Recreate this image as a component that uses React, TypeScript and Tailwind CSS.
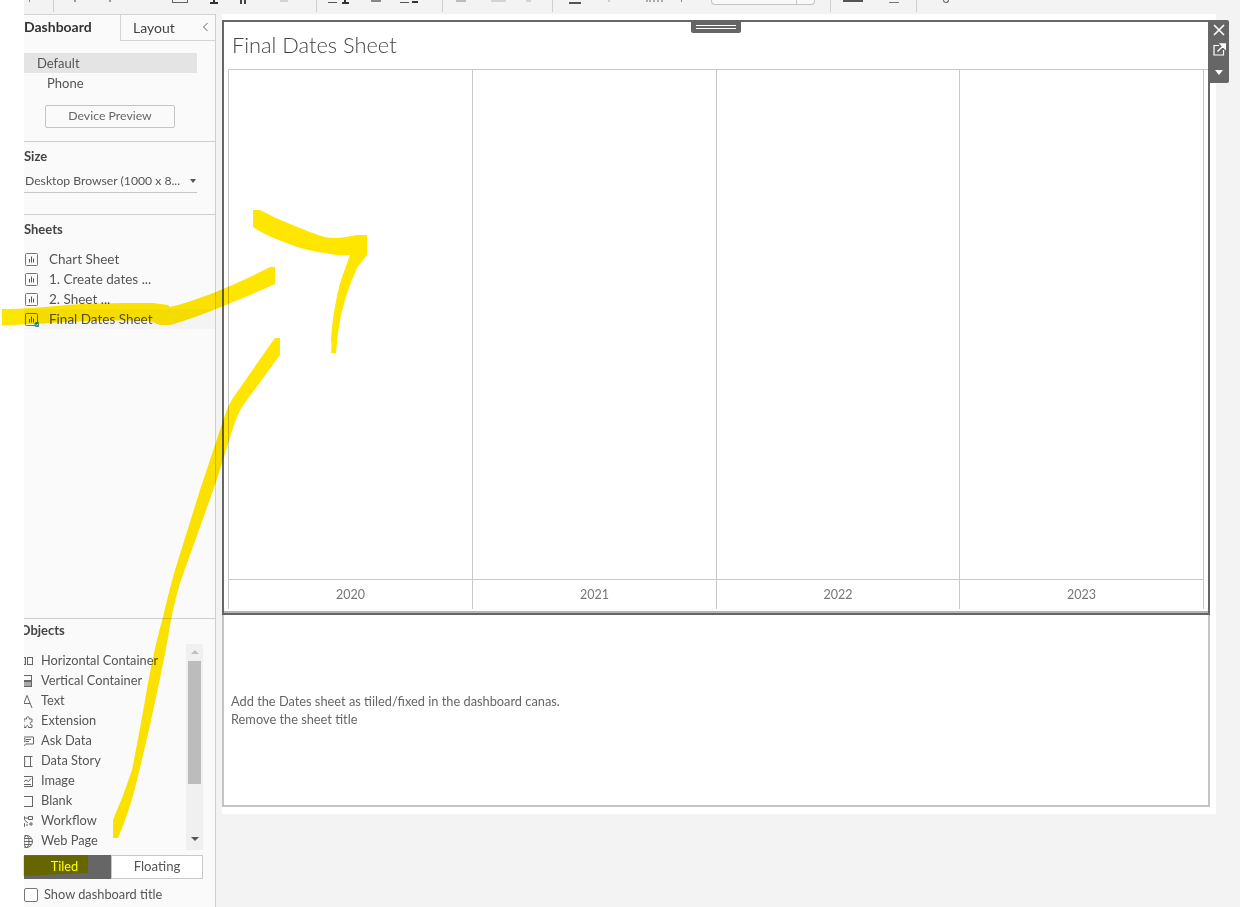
import React from "react";

const FONT = "font-['Lato','Open_Sans',sans-serif]";

function SheetIcon({ check = false }: { check?: boolean }) {
  return (
    <svg width="15" height="16" viewBox="0 0 15 16" className="shrink-0">
      <rect x="1.5" y="2.5" width="12" height="12" rx="1" fill="none" stroke="#777" />
      <path d="M5.5 11.5V8M7.5 11.5V5.5M9.5 11.5V7.5" stroke="#555" strokeWidth="1" />
      {check && <circle cx="13" cy="13.5" r="2.6" fill="#2a7f8e" />}
      {check && <path d="M11.8 13.5l1 1 1.4-1.8" stroke="#fff" strokeWidth="0.8" fill="none" />}
    </svg>
  );
}

function ObjectIcon({ name }: { name: string }) {
  const s = { fill: "none", stroke: "#666", strokeWidth: 1 };
  return (
    <svg width="15" height="15" viewBox="0 0 15 15" className="shrink-0">
      {name === "h" && (
        <g {...s}>
          <rect x="0.5" y="3.5" width="5" height="7" fill="#ddd" />
          <rect x="7.5" y="3.5" width="5" height="7" />
        </g>
      )}
      {name === "v" && (
        <g {...s}>
          <rect x="2.5" y="1.5" width="9" height="5" />
          <rect x="2.5" y="7.5" width="9" height="5" fill="#aaa" />
        </g>
      )}
      {name === "t" && <path d="M2 14L7 1.5 12 14M3.8 9.5h6.4" {...s} />}
      {name === "e" && <path d="M4 5h2.5c-.8-3 3.5-3 2.7 0H12v3c-2.5-.8-2.5 3.5 0 3v2.5H8.5c.7-2.5-3-2.5-2.5 0H4v-3c-2.5.6-2.5-3 0-2.5z" {...s} />}
      {name === "a" && <path d="M4 3h9.5v7H5.5L3 13v-3M6 5.5h5M6 7.5h3M2 6l3-1.5V8z" {...s} />}
      {name === "d" && <path d="M1.5 2.5h11M1.5 12.5h11M4 2.5c1 3 1 7 0 10M10.5 2.5v10M4 2.5c0 3 0 7 0 10" {...s} />}
      {name === "i" && <path d="M1.5 2.5h11v10h-11zM3 8.5l3-2.5 2.5 1.5 2.5-3M3 10.5h8" {...s} />}
      {name === "b" && <rect x="1.5" y="2.5" width="11" height="10" {...s} />}
      {name === "w" && <path d="M1.5 2.5h3v3h-3zM8.5 2.5h4v3h-4zM1.5 9.5h3v3h-3zM5 4h3M4.5 6l3.5 3M9 10h4M11 8v4M6 11h2" {...s} />}
      {name === "g" && (
        <g {...s}>
          <circle cx="6.5" cy="7.5" r="6" />
          <ellipse cx="6.5" cy="7.5" rx="2.5" ry="6" />
          <path d="M.5 7.5h12M1.5 4.5h10M1.5 10.5h10" />
        </g>
      )}
    </svg>
  );
}

const objects = [
  ["h", "Horizontal Container"],
  ["v", "Vertical Container"],
  ["t", "Text"],
  ["e", "Extension"],
  ["a", "Ask Data"],
  ["d", "Data Story"],
  ["i", "Image"],
  ["b", "Blank"],
  ["w", "Workflow"],
  ["g", "Web Page"],
];

const sheets = ["Chart Sheet", "1. Create dates ...", "2. Sheet ...", "Final Dates Sheet"];
const years = ["2020", "2021", "2022", "2023"];

function Toolbar() {
  return (
    <div className="flex h-[14px] items-start overflow-hidden bg-[#f3f3f3] [&>*]:shrink-0">
      <div className="ml-[5px] h-[2px] w-[1px] bg-[#7a7ac8]" />
      <div className="ml-[23px] h-[12px] w-px bg-[#d0d0d0]" />
      <div className="ml-[20px] h-[2px] w-[2px] bg-[#999]" />
      <div className="ml-[33px] h-[2px] w-[2px] bg-[#999]" />
      <div className="ml-[61px] h-[3px] w-[16px] border-x border-b border-[#666]" />
      <div className="relative ml-[22px] h-[4px] w-[8px] border-b-2 border-[#333]">
        <div className="absolute left-[3px] top-0 h-[4px] w-[2px] bg-[#333]" />
      </div>
      <div className="ml-[22px] h-[4px] w-[6px] border-x-2 border-[#444]" />
      <div className="ml-[34px] h-[2px] w-[8px] bg-[#d4d4d4]" />
      <div className="ml-[28px] h-[12px] w-px bg-[#d0d0d0]" />
      <div className="ml-[11px] h-[3px] w-[9px] border-b border-[#555]" />
      <div className="relative ml-[5px] h-[4px] w-[7px] border-b-2 border-[#333]">
        <div className="absolute left-[2px] top-0 h-[4px] w-[2px] bg-[#333]" />
      </div>
      <div className="ml-[22px] h-[2px] w-[10px] bg-[#888]" />
      <div className="ml-[19px] h-[3px] w-[9px] border-b border-[#555]" />
      <div className="ml-[3px] h-[3px] w-[6px] border-b-2 border-[#333]" />
      <div className="ml-[24px] h-[12px] w-px bg-[#d0d0d0]" />
      <div className="ml-[13px] h-[2px] w-[10px] bg-[#bbb]" />
      <div className="ml-[25px] h-[2px] w-[15px] bg-[#d4d4d4]" />
      <div className="ml-[20px] h-[2px] w-[5px] bg-[#d4d4d4]" />
      <div className="ml-[21px] h-[12px] w-px bg-[#d0d0d0]" />
      <div className="ml-[16px] mt-[2px] h-[2px] w-[12px] bg-[#555]" />
      <div className="ml-[27px] h-[2px] w-[2px] bg-[#ccc]" />
      <div className="ml-[36px] h-[2px] w-[17px] border-b-2 border-dotted border-[#aaa]" />
      <div className="ml-[18px] h-[2px] w-px bg-[#888]" />
      <div className="ml-[29px] flex h-[5px] w-[104px] justify-end rounded-b-sm border border-t-0 border-[#c4c4c4] bg-[#f8f8f8]">
        <div className="w-[18px] border-l border-[#c4c4c4]" />
      </div>
      <div className="ml-[15px] h-[12px] w-px bg-[#d0d0d0]" />
      <div className="ml-[12px] h-[2px] w-[20px] bg-[#555]" />
      <div className="ml-[26px] h-[3px] w-[10px] border-b border-[#777]" />
      <div className="ml-[17px] h-[12px] w-px bg-[#d0d0d0]" />
      <div className="ml-[26px] h-[3px] w-[6px] rounded-b-full border-x border-b border-[#666]" />
    </div>
  );
}

function Sidebar() {
  return (
    <aside className="flex h-full w-[192px] shrink-0 flex-col overflow-hidden border-r border-[#cfcfcf] bg-[#fafafa] pb-[4px] text-[13.5px] text-[#555]">
      <div className="flex h-[27px] shrink-0 border-t border-[#d4d4d4]">
        <div className="flex w-[97px] items-center border-r border-[#d4d4d4] pb-[4px] text-[14px] font-bold text-[#333]">Dashboard</div>
        <div className="flex flex-1 items-center justify-between border-b border-[#d4d4d4] pb-[1px] pl-[12px] pr-[6px] text-[14px] text-[#444]">
          <span>Layout</span>
          <svg width="7" height="10" viewBox="0 0 7 10"><path d="M5.5 1L1.5 5l4 4" fill="none" stroke="#666" /></svg>
        </div>
      </div>
      <div className="mt-[12px] flex h-[20px] w-[173px] shrink-0 items-center bg-[#e4e4e4] pl-[13px] pt-[1px] text-[13px]">Default</div>
      <div className="flex h-[20px] shrink-0 items-center pl-[23px] pt-[1px] text-[13px]">Phone</div>
      <button className="ml-[21px] mt-[12px] h-[23px] w-[130px] shrink-0 rounded-[2px] border border-[#c4c4c4] text-[12.3px] text-[#666]">Device Preview</button>
      <div className="mt-[13px] shrink-0 border-t border-[#d0d0d0]" />
      <div className="mt-[5px] h-[19px] shrink-0 text-[13px] font-bold text-[#444]">Size</div>
      <div className="mt-[6px] flex h-[21px] w-[173px] shrink-0 items-center justify-between border-b border-[#c8c8c8] px-[1px] pb-[2px] text-[12.2px]">
        <span>Desktop Browser (1000 x 8...</span>
        <span className="h-0 w-0 border-x-[3.5px] border-t-[4px] border-x-transparent border-t-[#555]" />
      </div>
      <div className="mt-[21px] shrink-0 border-t border-[#d0d0d0]" />
      <div className="mt-[5px] h-[19px] shrink-0 text-[13px] font-bold text-[#444]">Sheets</div>
      <div className="mt-[10px] flex shrink-0 flex-col">
        {sheets.map((s, i) => (
          <div key={s} className={`flex h-[20px] items-center gap-[10px] ${i === 3 ? "bg-[#f4f4f4]" : ""}`}>
            <SheetIcon check={i === 3} />
            <span>{s}</span>
          </div>
        ))}
      </div>
      <div className="flex-1" />
      <div className="shrink-0 border-t border-[#d0d0d0]" />
      <div className="ml-[-4px] mt-[2px] h-[18px] shrink-0 text-[13px] font-bold text-[#444]">Objects</div>
      <div className="mt-[5px] flex h-[206px] w-[179px] shrink-0">
        <div className="ml-[-4px] flex-1 pt-[7px]">
          {objects.map(([icon, label]) => (
            <div key={label} className="flex h-[20px] items-center whitespace-nowrap text-[12.8px]">
              <ObjectIcon name={icon} />
              <span className="ml-[6px]">{label}</span>
            </div>
          ))}
        </div>
        <div className="flex w-[17px] shrink-0 flex-col items-center bg-[#f0f0f0]">
          <span className="mt-[6px] h-0 w-0 border-x-[4px] border-b-[4px] border-x-transparent border-b-[#c0c0c0]" />
          <div className="mt-[7px] h-[123px] w-[13px] bg-[#bcbcbc]" />
          <span className="mt-[53px] h-0 w-0 border-x-[4px] border-t-[4px] border-x-transparent border-t-[#555]" />
        </div>
      </div>
      <div className="mt-[5px] flex h-[24px] w-[179px] shrink-0 text-[12.8px]">
        <div className="flex w-[87px] items-center justify-center bg-[#666] pb-[1px] text-white">
          <span className="mr-[6px]">Tiled</span>
        </div>
        <div className="flex flex-1 items-center justify-center border border-[#c8c8c8] bg-white pb-[1px] text-[13.2px]">Floating</div>
      </div>
      <label className="mt-[8px] flex h-[16px] shrink-0 items-center gap-[6px] text-[12.8px]">
        <span className="h-[14px] w-[14px] rounded-[2px] border border-[#777] bg-white" />
        Show dashboard title
      </label>
    </aside>
  );
}

function Chart() {
  return (
    <div className="ml-[4px] flex h-[540px] border-t border-[#c8c8c8]">
      {years.map((y, i) => (
        <div key={y} className={`flex h-full flex-col border-l border-[#c8c8c8] ${i === 2 ? "w-[243px]" : i === 3 ? "w-[245px] border-r" : "w-[244px]"}`}>
          <div className="h-[510px] border-b border-[#c8c8c8]" />
          <div className="flex flex-1 items-center justify-center pt-[2px] text-[12.5px] text-[#777]">{y}</div>
        </div>
      ))}
    </div>
  );
}

function Canvas() {
  return (
    <main className="flex-1 pl-[6px]">
      <div className="h-[800px] w-[994px] bg-white pt-[6px]">
        <div className="relative h-[595px] w-[988px] border-x-2 border-t-2 border-[#666]">
          <div className="h-[47px] pl-[8px] pt-[10px] text-[21.8px] font-light leading-[26px] text-[#444]">Final Dates Sheet</div>
          <Chart />
          <div className="absolute inset-x-0 bottom-0 h-[4px] border-b-2 border-[#666] bg-[#b4b4b4]" />
          <div className="absolute left-[467px] top-[-1px] flex h-[12px] w-[50px] flex-col items-center justify-center gap-[2px] rounded-b-[2px] bg-[#666]">
            <div className="h-px w-[40px] bg-white" />
            <div className="h-px w-[40px] bg-white" />
          </div>
          <div className="absolute left-[985px] top-[-2px] flex h-[63px] w-[20px] flex-col items-center rounded-r-[2px] bg-[#666]">
            <svg width="12" height="12" viewBox="0 0 12 12" className="mt-[4px]">
              <path d="M1 1l10 10M11 1L1 11" stroke="#fff" strokeWidth="1.6" fill="none" />
            </svg>
            <svg width="13" height="13" viewBox="0 0 13 13" className="mt-[7px]">
              <path d="M6 2.5H1v9.5h9.5V7" stroke="#fff" strokeWidth="1.2" fill="none" />
              <path d="M4.5 8.5L10.5 2.5M7.5 1h5v5z" stroke="#fff" strokeWidth="1.4" fill="#fff" />
            </svg>
            <span className="mt-[14px] h-0 w-0 border-x-[4.5px] border-t-[5px] border-x-transparent border-t-white" />
          </div>
        </div>
        <div className="flex h-[192px] w-[988px] flex-col border-x-2 border-b-2 border-[#c4c4c4] pl-[7px] pt-[77px] text-[12.8px] leading-[18px] text-[#666]">
          <span>Add the Dates sheet as tiiled/fixed in the dashboard canas.</span>
          <span>Remove the sheet title</span>
        </div>
      </div>
    </main>
  );
}

export default function App() {
  return (
    <div className={`relative flex h-[907px] w-[1240px] overflow-hidden bg-white ${FONT}`}>
      <div className="w-[24px] shrink-0" />
      <div className="flex min-w-0 flex-1 flex-col bg-[#f3f3f3]">
        <Toolbar />
        <div className="flex min-h-0 flex-1">
          <Sidebar />
          <Canvas />
        </div>
      </div>
      {/* highlighter strokes drawn over the screenshot */}
      <svg width="1240" height="907" viewBox="0 0 1240 907" className="pointer-events-none absolute inset-0 mix-blend-multiply">
        <path fill="#ffe600" d="M253 210L260 210C275 218 285 222 300 228C312 233 325 238 333 238C342 238 350 236 357 235L367 235L367 255L357 268Q350 283 345 300Q340 316 338 333L336 353L331 353Q332 345 331 340Q332 322 335 307Q337 295 340 283L350 255C342 256 335 255 325 253C315 252 305 249 300 248C285 242 267 237 253 227Z" />
        <path fill="#ffe600" d="M2 309C25 309 45 307 67 305C95 303 130 303 153 303L168 305L170 307C200 300 235 285 270 267L275 267L275 284C235 302 195 318 170 325L160 325L150 321C120 320 90 321 67 322C45 323 25 325 2 325Z" />
        <path fill="#ffe600" d="M272 342L275 338L280 338L280 355L244 404Q238 413 234 425L215 485L180 583Q172 610 168 638Q160 680 150 725Q142 760 137 780Q130 810 118 838L113 838L113 820Q124 795 132 770Q140 730 148 683Q155 645 163 617Q168 595 175 570L200 490L226 412Q229 404 233 398Z" />
        <path fill="#ffff00" d="M23 856L88 855L88 873L23 876Z" />
      </svg>
    </div>
  );
}
